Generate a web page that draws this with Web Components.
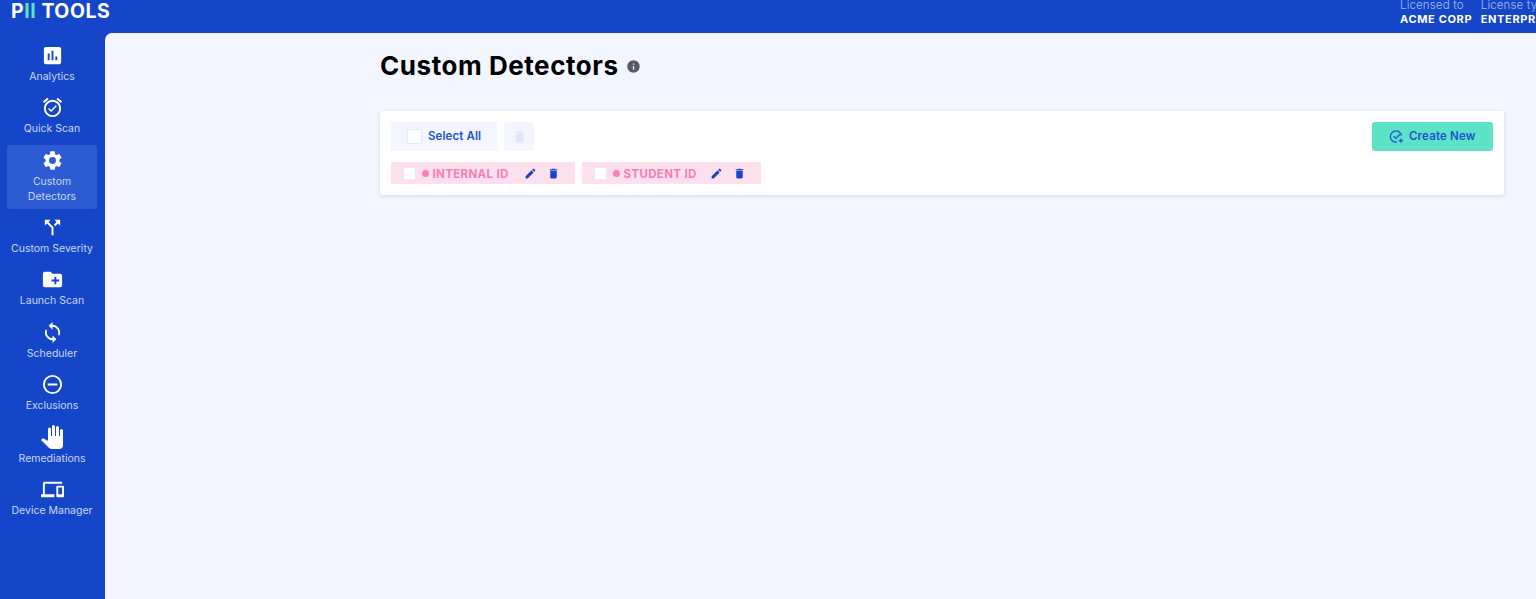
<!DOCTYPE html>
<html><head><meta charset="utf-8"><title>Custom Detectors</title>
<style>
html,body{margin:0;height:100%;overflow:hidden;background:#1546c9;font-family:Inter,"Noto Sans",sans-serif}
app-shell{height:599px}
</style></head><body>
<app-shell>
<top-bar slot="top"></top-bar>
<side-nav slot="side">
<nav-item label="Analytics" icon="analytics"></nav-item>
<nav-item label="Quick Scan" icon="alarm"></nav-item>
<nav-item label="Custom Detectors" icon="gear" active></nav-item>
<nav-item label="Custom Severity" icon="split"></nav-item>
<nav-item label="Launch Scan" icon="folder"></nav-item>
<nav-item label="Scheduler" icon="sync"></nav-item>
<nav-item label="Exclusions" icon="minus"></nav-item>
<nav-item label="Remediations" icon="hand"></nav-item>
<nav-item label="Device Manager" icon="devices"></nav-item>
</side-nav>
<detectors-page></detectors-page>
</app-shell>
<script>
const ICONS={
analytics:'<path fill="#fff" d="M19 3H5a2 2 0 0 0-2 2v14a2 2 0 0 0 2 2h14a2 2 0 0 0 2-2V5a2 2 0 0 0-2-2zM9 17H7v-7h2zm4 0h-2V7h2zm4 0h-2v-4h2z"/>',
alarm:'<path fill="#fff" d="M22 5.72l-4.600-3.860-1.290 1.530 4.600 3.860zM7.880 3.390 6.600 1.860 2 5.710l1.290 1.530zM12 4a9 9 0 1 0 0 18 9 9 0 0 0 0-18zm0 16a7 7 0 1 1 0-14 7 7 0 0 1 0 14zm-1.460-5.470-2.130-2.130-1.060 1.060 3.180 3.180 6-6-1.060-1.060z"/>',
gear:'<path fill="#fff" d="M19.14 12.94a7.100 7.100 0 0 0 0-1.880l2.030-1.580a.5.5 0 0 0 .12-.61l-1.920-3.320a.5.5 0 0 0-.59-.22l-2.390.96a7 7 0 0 0-1.620-.94l-.36-2.540a.48.48 0 0 0-.48-.41h-3.840a.48.48 0 0 0-.47.41l-.36 2.540a7.300 7.300 0 0 0-1.620.94l-2.390-.96a.5.5 0 0 0-.59.22L2.750 8.870a.47.47 0 0 0 .12.61l2.030 1.580a7 7 0 0 0 0 1.880l-2.030 1.580a.5.5 0 0 0-.12.61l1.920 3.320c.12.22.37.29.59.22l2.390-.96c.5.38 1.030.7 1.620.94l.36 2.540c.05.24.24.41.48.41h3.840c.24 0 .44-.17.47-.41l.36-2.540a7 7 0 0 0 1.620-.94l2.390.96c.22.08.47 0 .59-.22l1.920-3.320a.47.47 0 0 0-.12-.61zM12 15.600a3.600 3.600 0 1 1 0-7.200 3.600 3.600 0 0 1 0 7.200z"/>',
split:'<path fill="#fff" d="M14 4l2.290 2.290-2.880 2.880 1.420 1.420 2.880-2.880L20 10V4zm-4 0H4v6l2.290-2.290 4.710 4.700V20h2v-8.410l-5.290-5.300z"/>',
folder:'<path fill="#fff" d="M20 6h-8l-2-2H4a2 2 0 0 0-2 2v12a2 2 0 0 0 2 2h16a2 2 0 0 0 2-2V8a2 2 0 0 0-2-2zm-1 8h-3v3h-2v-3h-3v-2h3V9h2v3h3z"/>',
sync:'<path fill="#fff" d="M12 4V1L8 5l4 4V6a6 6 0 0 1 5.650 8.020l1.460 1.460A8 8 0 0 0 12 4zm0 14a6 6 0 0 1-5.650-8.020L4.890 8.520A8 8 0 0 0 12 20v3l4-4-4-4z"/>',
minus:'<path fill="#fff" d="M7 11v2h10v-2zm5-9a10 10 0 1 0 0 20 10 10 0 0 0 0-20zm0 18a8 8 0 1 1 0-16 8 8 0 0 1 0 16z"/>',
hand:'<path fill="#fff" d="M23 5.500V20a4 4 0 0 1-4 4h-7.300a4 4 0 0 1-2.830-1.170L1 14.900s1.260-1.230 1.300-1.250a1.200 1.200 0 0 1 .79-.3c.22 0 .42.06.6.16C3.730 13.520 8 15.970 8 15.970V4a1.500 1.500 0 0 1 3 0v7h1V1.500a1.500 1.500 0 0 1 3 0V11h1V2.500a1.500 1.500 0 0 1 3 0V11h1V5.500a1.500 1.500 0 0 1 3 0z"/>',
devices:'<path fill="#fff" d="M4 6h18V4H4a2 2 0 0 0-2 2v11H0v3h14v-3H4zm19 2h-6a1 1 0 0 0-1 1v10a1 1 0 0 0 1 1h6a1 1 0 0 0 1-1V9a1 1 0 0 0-1-1zm-1 9h-4v-7h4z"/>',
pencil:'<path fill="currentColor" d="M3 17.250V21h3.750L17.810 9.940l-3.750-3.750zM20.710 7.040a1 1 0 0 0 0-1.410l-2.340-2.340a1 1 0 0 0-1.410 0l-1.830 1.830 3.750 3.750z"/>',
trash:'<path fill="currentColor" d="M6 19a2 2 0 0 0 2 2h8a2 2 0 0 0 2-2V7H6zM19 4h-3.500l-1-1h-5l-1 1H5v2h14z"/>',
info:'<path fill="currentColor" d="M12 2a10 10 0 1 0 0 20 10 10 0 0 0 0-20zm1 15h-2v-6h2zm0-8h-2V7h2z"/>',
create:'<path fill="none" stroke="currentColor" stroke-width="2" d="M20 10.500A9 9 0 1 0 12.500 21"/><path fill="none" stroke="currentColor" stroke-width="2" d="M7.500 11.500l3.500 3.500 7-7"/><path fill="none" stroke="currentColor" stroke-width="2" d="M19 15v7M15.500 18.500h7"/>'
};
const svg=(n,s)=>`<svg xmlns="http://www.w3.org/2000/svg" viewBox="0 0 24 24" width="${s}" height="${s}" aria-hidden="true">${ICONS[n]}</svg>`;
function define(name,html){
  customElements.define(name,class extends HTMLElement{
    constructor(){super();this.attachShadow({mode:'open'})}
    connectedCallback(){this.shadowRoot.innerHTML=typeof html==='function'?html(this):html;}
  });
}
define('app-shell',`<style>
:host{display:grid;grid-template-columns:105px 1fr;grid-template-rows:33px 1fr;background:#1546c9;overflow:hidden;width:1536px}
.top{grid-column:1/3;min-width:0;overflow:hidden}
.main{min-width:0;background:#f3f6fe;border-top-left-radius:7px}
</style><div class="top"><slot name="top"></slot></div><div><slot name="side"></slot></div><div class="main"><slot></slot></div>`);
define('top-bar',`<style>
:host{display:flex;height:33px;align-items:flex-start;justify-content:space-between;color:#fff;overflow:hidden}
.logo{font:700 19.500px/1 Inter,sans-serif;margin:2px 0 0 11px;letter-spacing:.55px;white-space:nowrap}
.logo b{color:#5ce3c6;font-weight:700}
.right{display:flex;gap:8.500px;width:136px;flex:none;margin-top:-2px;overflow:hidden}
.c{flex:none;white-space:nowrap}
.l{font:300 11.500px/14px Inter,sans-serif;color:#a9bcec;letter-spacing:.15px}
.v{font:700 11px/14px Inter,sans-serif;letter-spacing:.65px;margin-top:0}
</style><div class="logo">P<b>II</b> TOOLS</div>
<div class="right"><div class="c"><div class="l">Licensed to</div><div class="v">ACME CORP</div></div><div class="c"><div class="l">License type</div><div class="v">ENTERPRISE</div></div></div>`);
define('side-nav',`<style>:host{display:flex;flex-direction:column;gap:3px;padding:7px 7px 0 7px;width:90px}</style><slot></slot>`);
define('nav-item',h=>`<style>
:host{display:flex;flex-direction:column;align-items:center;min-height:49.500px;border-radius:3px;color:#c9d6f6;text-align:center;font:400 10.500px/15px Inter,sans-serif;box-sizing:border-box;padding-top:4px}
:host([active]){background:#2d5bd3;min-height:64px}
svg{display:block}
.ic{height:22px;display:flex;align-items:center;justify-content:center;margin-bottom:2.500px}
.t{padding:0 2px;white-space:normal;letter-spacing:0}
:host(:not([active])) .t{margin:0 -6px;white-space:nowrap}
:host([active]) .t{width:70px}
</style><div class="ic">${svg(h.getAttribute('icon'),h.getAttribute('icon')==='hand'?24:23)}</div><div class="t">${h.getAttribute('label')}</div>`);
define('check-box',h=>`<style>:host{display:inline-block;width:${h.getAttribute('s')||11}px;height:${h.getAttribute('s')||11}px;background:#fff;border:1px solid #e6ebf8;border-radius:2px;flex:none}</style>`);
define('detector-tag',h=>`<style>
:host{display:flex;align-items:center;height:22px;background:#fde0ed;color:#fb7db3;font:700 11.500px/22px Inter,sans-serif;letter-spacing:.35px;box-sizing:border-box;padding-left:12px;width:${h.getAttribute('w')}px;border-radius:1px}
.dot{width:7px;height:7px;border-radius:50%;background:#fb7db3;margin:0 3.500px 0 6px;flex:none}
.name{white-space:nowrap;width:${h.getAttribute('nw')}px;position:relative;top:.5px}
.a{color:#1546c9;display:flex;margin-left:${h.getAttribute('gap')}px}
.a+.a{margin-left:10px}
</style><check-box></check-box><span class="dot"></span><span class="name">${h.getAttribute('name')}</span><span class="a">${svg('pencil',13)}</span><span class="a">${svg('trash',13)}</span>`);
define('detectors-page',`<style>
:host{display:block;padding:0 32px 0 275px}
h1{margin:0;font:700 26px/1 Inter,sans-serif;color:#000;letter-spacing:.55px;display:flex;align-items:center;gap:7px;padding-top:8.500px;height:57.500px;box-sizing:border-box}
h1 span{color:#555a66;display:flex}
.card{background:#fff;border-radius:3px;box-shadow:0 1px 4px rgba(40,60,110,.16);padding:11px;height:84px;box-sizing:border-box;margin-top:20.500px}
.row{display:flex;align-items:center;height:29px}
.sel{display:flex;align-items:center;gap:6px;width:106px;height:29px;background:#f3f6fe;border-radius:3px;box-sizing:border-box;padding-left:16px;color:#1f52d4;font:600 11.500px/1 Inter,sans-serif;letter-spacing:.1px;white-space:nowrap}
.del{width:30px;height:29px;background:#f3f6fe;border-radius:3px;margin-left:7px;display:flex;align-items:center;justify-content:center;color:#e0e6f9}
.new{margin-left:auto;display:flex;align-items:center;gap:5px;width:121px;height:29px;background:#5ce3c6;border-radius:3px;color:#1f52d4;font:600 11.500px/1 Inter,sans-serif;box-sizing:border-box;padding-left:17px;letter-spacing:.15px;white-space:nowrap}
.tags{display:flex;gap:7px;margin-top:11px}
</style>
<h1>Custom Detectors <span>${svg('info',15)}</span></h1>
<div class="card">
<div class="row"><div class="sel"><check-box s="13"></check-box>Select All</div><div class="del">${svg('trash',15)}</div><div class="new">${svg('create',15)}Create New</div></div>
<div class="tags"><detector-tag name="INTERNAL ID" w="184" nw="78" gap="13"></detector-tag><detector-tag name="STUDENT ID" w="179" nw="73" gap="13"></detector-tag></div>
</div>`);
</script>
</body></html>
